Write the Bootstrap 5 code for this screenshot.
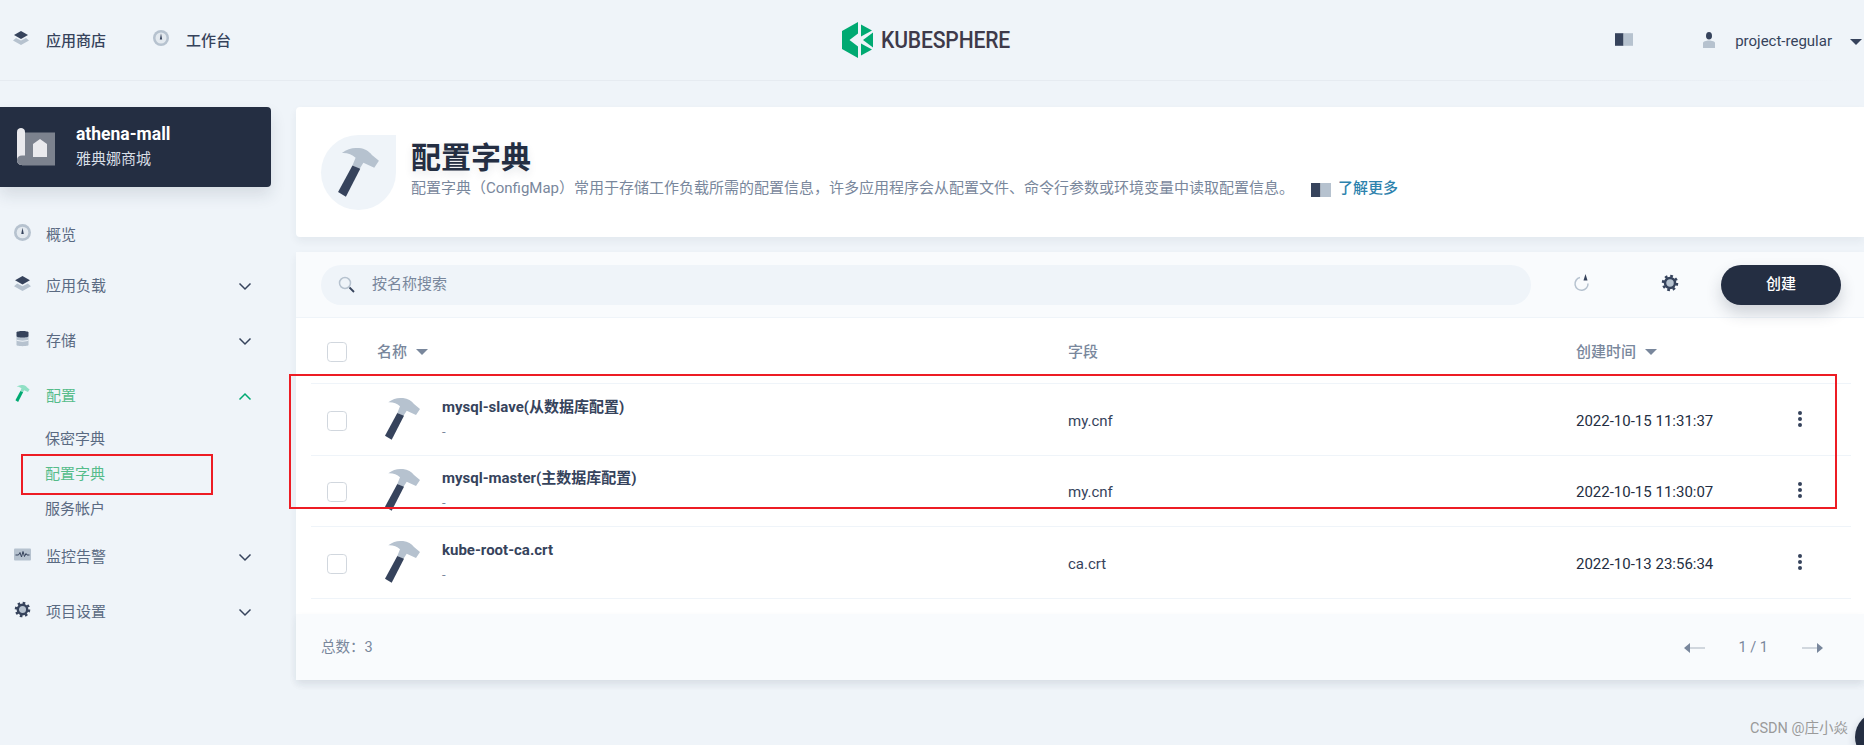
<!DOCTYPE html>
<html lang="zh">
<head>
    <meta charset="UTF-8">
    <meta name="viewport" content="width=device-width, initial-scale=1.0">
    <title>配置字典</title>
    <link href="https://cdn.jsdelivr.net/npm/bootstrap@5.3.0/dist/css/bootstrap.min.css" rel="stylesheet">
    <style>
        html, body { height: 100%; }
        body {
            position: relative;
            overflow: hidden;
            background: #eff4f9;
            color: #242e42;
            font-family: Roboto, "Noto Sans CJK SC", sans-serif;
            font-size: 15px;
        }
        /* 顶部 */
        .top-bar { height: 81px; padding: 2px 2px 0 13px; background: linear-gradient(90deg, #e6ebf1, #e6ebf1 85%, #eff4f9) bottom / 100% 1px no-repeat; }
        .top-side { width: 826px; }
        .top-link { font-weight: 500; margin-right: 47px; color: #36435c; }
        .top-link svg { width: 16px; height: 16px; margin-right: 17px; position: relative; top: -4px; }
        .logo-text { font-size: 24px; font-weight: 500; letter-spacing: -.2px; color: #3e3a4a; margin-left: 7px; transform: scaleX(.88); transform-origin: left; width: 130px; white-space: nowrap; }
        .logo-box { margin-left: 3px; position: relative; top: -2px; }
        .user-name { font-size: 15px; color: #36435c; }
        .user-name svg { position: relative; top: -2px; }
        .book-top { margin-right: 70px; }
        .person-top { margin-right: 20px; }
        .caret-down { width: 0; height: 0; margin-left: 18px; border: 6px solid transparent; border-top: 6px solid #36435c; border-bottom: 0; }
        /* 侧栏 */
        .side-col { width: 271px; flex: none; }
        .project-box { height: 80px; margin-top: 26px; padding-left: 17px; background: #242e42; border-radius: 0 4px 4px 0; box-shadow: 0 8px 16px rgba(36,46,66,.12); color: #fff; }
        .project-name { font-size: 17.500px; font-weight: 700; line-height: 24px; }
        .project-desc { font-size: 15px; line-height: 26px; color: #d8dee5; }
        .project-text { margin-left: 5px; }
        .side-menu { margin-top: 26px; color: #5a6a82; }
        .side-item { height: 44px; padding-left: 14px; margin-bottom: 11px; position: relative; }
        .side-item:first-child { margin-bottom: 7px; }
        .side-item > svg:first-child { width: 17px; height: 17px; margin-right: 15px; position: relative; top: -3px; flex: none; }
        .side-arrow { width: 14px; height: 9px; position: absolute; left: 238px; top: 18px; }
        .side-on { color: #55bc8a; margin-bottom: 4px; }
        .sub-item { height: 35px; padding-left: 45px; }
        .sub-on { color: #55bc8a; }
        .sub-wrap { margin-bottom: 8px; }
        /* 主区域 */
        .main-col { margin-left: 25px; padding-top: 26px; }
        .intro-box { height: 130px; padding-left: 25px; background: #fff; border-radius: 4px 0 0 4px; box-shadow: 0 4px 8px rgba(36,46,66,.06); margin-bottom: 15px; }
        .intro-icon { width: 75px; height: 75px; margin-right: 15px; background: #eff4f9; border-radius: 50% 0 50% 50%; flex: none; }
        .intro-title { font-size: 30px; font-weight: 700; line-height: 36px; margin-top: -7px; text-shadow: 0 4px 8px rgba(36,46,66,.1); }
        .intro-desc { font-size: 15px; line-height: 20px; color: #79879c; margin-top: 2px; }
        .more-link { color: #2d82ad; font-weight: 500; text-decoration: none; margin-left: 17px; }
        .more-link svg { width: 20px; height: 14px; margin-right: 7px; position: relative; top: 1px; }
        .list-box { border-radius: 4px 0 0 4px; background: #fff; box-shadow: 0 4px 8px rgba(36,46,66,.06); }
        .tool-bar { height: 66px; padding: 0 23px 0 25px; background: #f9fbfd; border-bottom: 1px solid #eff4f9; }
        .search-wrap { height: 40px; padding-left: 17px; background: #eff4f9; border-radius: 20px; }
        .search-wrap svg { width: 17px; height: 17px; flex: none; }
        .search-input { border: 0; outline: 0; background: transparent; margin-left: 15px; font-size: 15px; color: #242e42; width: 400px; }
        .search-input::placeholder { color: #79879c; opacity: 1; }
        .tool-slot { width: 102px; }
        .tool-slot + .tool-slot { width: 74px; margin-right: 14px; }
        .tool-slot svg { width: 18px; height: 18px; position: relative; top: -2px; }
        .create-btn { width: 120px; height: 40px; border: 0; border-radius: 20px; background: #242e42; color: #fff; font-size: 15px; font-weight: 500; box-shadow: 0 8px 16px rgba(36,46,66,.2); }
        .create-btn:hover { background: #242e42; color: #fff; }
        .table-wrap { padding: 0 13px 15px 15px; }
        .cfg-row { display: flex; align-items: center; height: 71.500px; padding-top: 3px; border-bottom: 1px solid #eff4f9; }
        .cfg-head { height: 66px; color: #79879c; font-weight: 500; }
        .cell-check { display: flex; width: 66px; padding-left: 16px; flex: none; }
        .cell-name { width: 691px; flex: none; }
        .cell-field { width: 508px; flex: none; color: #36435c; font-size: 15px; }
        .cell-time { width: 222px; flex: none; font-size: 15px; }
        .cfg-head .cell-field, .cfg-head .cell-time { color: #79879c; }
        .cfg-check { width: 20px; height: 20px; margin: 0; border: 1px solid #d1d7de; border-radius: 3px; }
        .caret-grey { display: inline-block; width: 0; height: 0; margin-left: 9px; vertical-align: 2px; border: 6px solid transparent; border-top: 6px solid #79879c; border-bottom: 0; }
        .hammer-slot { width: 35px; height: 42px; margin: 0 22px 0 8px; flex: none; position: relative; top: -2px; }
        .cfg-title { font-weight: 700; font-size: 15px; line-height: 20px; color: #36435c; margin-top: -3px; }
        .cfg-sub { font-size: 13px; line-height: 20px; color: #79879c; margin-top: 5px; }
        .more-dots { width: 4px; height: 16px; position: relative; top: -2px; }
        .pager-bar { height: 66px; padding: 3px 41px 0 25px; background: #f9fbfd; color: #79879c; font-size: 14.500px; box-shadow: 0 4px 8px rgba(36,46,66,.06); }
        .pager-bar svg { width: 21px; height: 10px; }
        .pager-num { margin: 0 34px; }
        /* 批注和水印 */
        .red-mark { position: absolute; border: 2px solid #ed1c24; pointer-events: none; }
        .mark-side { left: 21px; top: 454px; width: 192px; height: 41px; }
        .mark-rows { left: 289px; top: 374px; width: 1548px; height: 135px; }
        .water-mark { position: absolute; right: 16px; top: 719px; font-size: 14.500px; line-height: 20px; color: #9a9a9a; }
        .float-ball { position: absolute; left: 1855px; top: 712px; width: 50px; height: 50px; border-radius: 50%; background: #242e42; box-shadow: 0 4px 8px rgba(36,46,66,.2); }
    </style>
</head>
<body>

    <svg width="0" height="0" class="position-absolute">
        <symbol id="ic-hammer" viewBox="0 0 35 42">
            <path fill="#b6c2cf" d="M3.300 4.300C8 .8 13 -.4 18 .1 23 .6 26.500 3 29 6L35 11 31 17 21.700 12.700 18.500 17.700 12.300 15 15 8.300C12 5.500 8 4 3.300 4.300Z"/>
            <path fill="#36435c" d="M0 37.700 6.700 41.700 19 17.700 12.300 15Z"/>
        </symbol>
        <symbol id="ic-hammer-on" viewBox="0 0 35 42">
            <path fill="#90e0c5" d="M3.300 4.300C8 .8 13 -.4 18 .1 23 .6 26.500 3 29 6L35 11 31 17 21.700 12.700 18.500 17.700 12.300 15 15 8.300C12 5.500 8 4 3.300 4.300Z"/>
            <path fill="#00aa72" d="M0 37.700 6.700 41.700 19 17.700 12.300 15Z"/>
        </symbol>
        <symbol id="ic-layers" viewBox="0 0 16 16">
            <path fill="#b6c2cf" d="M3 8 8 10.500 13 8 16 10.500 8 15 0 10.500Z"/>
            <path fill="#36435c" d="M8 1 15 5 8 9 1 5Z"/>
        </symbol>
        <symbol id="ic-gauge" viewBox="0 0 16 16">
            <circle cx="8" cy="8" r="8" fill="#b6c2cf"/>
            <circle cx="8" cy="8" r="5.500" fill="#e3e9ef"/>
            <path fill="#36435c" d="M6.800 9.500 8 3.500 9.200 9.500Z"/>
        </symbol>
        <symbol id="ic-db" viewBox="0 0 14 17">
            <path fill="#b6c2cf" d="M1 6V15C1 16.500 13 16.500 13 15V6Z"/>
            <path fill="#eff4f9" d="M1 9.500C3 11 11 11 13 9.500V10.500C11 12 3 12 1 10.500Z"/>
            <path fill="#36435c" d="M1 2.500C1 .5 13 .5 13 2.500V6C13 8 1 8 1 6Z"/>
        </symbol>
        <symbol id="ic-pulse" viewBox="0 0 17 12">
            <rect width="17" height="12" rx="1" fill="#b6c2cf"/>
            <path fill="none" stroke="#36435c" stroke-width="1" d="M1.500 6.500H4.500L6 4 7.500 8.500 9 3 10.500 8 12 5 13 6.500H15.500"/>
        </symbol>
        <symbol id="ic-gear" viewBox="0 0 18 18">
            <circle cx="9" cy="9" r="5" fill="#b6c2cf" stroke="#36435c" stroke-width="2.500"/>
            <circle cx="9" cy="9" r="7" fill="none" stroke="#36435c" stroke-width="2.500" stroke-dasharray="2.700 2.800"/>
        </symbol>
        <symbol id="ic-book" viewBox="0 0 20 14">
            <path fill="#36435c" d="M0 0H9.500V14H0Z"/>
            <path fill="#b6c2cf" d="M9.500 0H20V14H9.500Z"/>
        </symbol>
        <symbol id="ic-person" viewBox="0 0 12 16">
            <ellipse cx="6" cy="3.800" rx="3" ry="3.800" fill="#36435c"/>
            <path fill="#b6c2cf" d="M0 11C0 9.500 3 8.500 6 8.500S12 9.500 12 11V16H0Z"/>
        </symbol>
        <symbol id="ic-down" viewBox="0 0 14 9">
            <path fill="none" stroke="#36435c" stroke-width="1.500" d="M1.500 1.500 7 7 12.500 1.500"/>
        </symbol>
        <symbol id="ic-up" viewBox="0 0 14 9">
            <path fill="none" stroke="#00aa72" stroke-width="1.500" d="M1.500 7.500 7 2 12.500 7.500"/>
        </symbol>
    </svg>

    <!-- 顶部栏 -->
    <header class="top-bar d-flex align-items-center">
        <div class="top-side d-flex align-items-center">
            <span class="top-link d-flex align-items-center"><svg><use href="#ic-layers"/></svg>应用商店</span>
            <span class="top-link d-flex align-items-center"><svg><use href="#ic-gauge"/></svg>工作台</span>
        </div>
        <div class="logo-box d-flex align-items-center flex-grow-1">
            <svg width="32" height="36" viewBox="0 0 32 36">
                <path fill="#00aa72" d="M16 0 0 9V27L16 36V24.500L7.500 18 16 11.500Z"/>
                <path fill="#00aa72" d="M19 2.500 30 8.500 19 14.500Z"/>
                <path fill="#00aa72" d="M31 10.500V25.500L21 18Z"/>
                <path fill="#00aa72" d="M19 21.500 30 27.500 19 33.500Z"/>
            </svg>
            <span class="logo-text">KUBESPHERE</span>
        </div>
        <div class="d-flex align-items-center user-name">
            <svg width="18" height="13" class="book-top"><use href="#ic-book"/></svg>
            <svg width="12" height="16" class="person-top"><use href="#ic-person"/></svg>
            <span>project-regular</span>
            <span class="caret-down"></span>
        </div>
    </header>

    <div class="d-flex">
        <!-- 侧栏 -->
        <aside class="side-col">
            <div class="project-box d-flex align-items-center">
                <svg width="38" height="38" viewBox="0 0 38 38" class="me-3 flex-shrink-0">
                    <rect x="5" y="4.500" width="33" height="33" fill="#7c828e"/>
                    <path fill="#e9e9ed" d="M0 4C0 1 2 0 4 0S8 1 8 4V28C4 28 2 29 2 32 2 35 4 37 8 37H5C2 37 0 35 0 32Z"/>
                    <path fill="#7c828e" d="M0 32C0 29 2 27.500 5 27.500H8V37H5C2 37 0 35 0 32Z"/>
                    <path fill="#e9e9ed" d="M16 16 23 11 30 16V29H16Z"/>
                </svg>
                <div class="project-text">
                    <div class="project-name">athena-mall</div>
                    <div class="project-desc">雅典娜商城</div>
                </div>
            </div>
            <ul class="side-menu list-unstyled mb-0">
                <li class="side-item d-flex align-items-center"><svg><use href="#ic-gauge"/></svg>概览</li>
                <li class="side-item d-flex align-items-center"><svg><use href="#ic-layers"/></svg>应用负载<svg class="side-arrow"><use href="#ic-down"/></svg></li>
                <li class="side-item d-flex align-items-center"><svg><use href="#ic-db"/></svg>存储<svg class="side-arrow"><use href="#ic-down"/></svg></li>
                <li class="side-item side-on d-flex align-items-center"><svg><use href="#ic-hammer-on"/></svg>配置<svg class="side-arrow"><use href="#ic-up"/></svg></li>
                <li class="sub-wrap">
                    <div class="sub-item d-flex align-items-center">保密字典</div>
                    <div class="sub-item sub-on d-flex align-items-center">配置字典</div>
                    <div class="sub-item d-flex align-items-center">服务帐户</div>
                </li>
                <li class="side-item d-flex align-items-center"><svg><use href="#ic-pulse"/></svg>监控告警<svg class="side-arrow"><use href="#ic-down"/></svg></li>
                <li class="side-item d-flex align-items-center"><svg><use href="#ic-gear"/></svg>项目设置<svg class="side-arrow"><use href="#ic-down"/></svg></li>
            </ul>
        </aside>

        <!-- 主内容 -->
        <main class="main-col flex-grow-1">
            <section class="intro-box d-flex align-items-center">
                <div class="intro-icon d-flex align-items-center justify-content-center">
                    <svg width="43" height="49"><use href="#ic-hammer"/></svg>
                </div>
                <div>
                    <div class="intro-title">配置字典</div>
                    <div class="intro-desc">配置字典（ConfigMap）常用于存储工作负载所需的配置信息，许多应用程序会从配置文件、命令行参数或环境变量中读取配置信息。<a href="#" class="more-link"><svg><use href="#ic-book"/></svg>了解更多</a></div>
                </div>
            </section>

            <section class="list-box">
                <div class="tool-bar d-flex align-items-center">
                    <div class="search-wrap d-flex align-items-center flex-grow-1">
                        <svg viewBox="0 0 17 17">
                            <circle cx="7" cy="7" r="5.500" fill="none" stroke="#b6c2cf" stroke-width="1.500"/>
                            <path stroke="#36435c" stroke-width="1.800" d="M11.500 11.500 16 16"/>
                        </svg>
                        <input class="search-input" type="text" placeholder="按名称搜索">
                    </div>
                    <div class="tool-slot d-flex justify-content-center">
                        <svg viewBox="0 0 18 18">
                            <path fill="none" stroke="#b6c2cf" stroke-width="1.500" d="M7 3.500A6.500 6.500 0 1 0 15 9.500"/>
                            <path fill="#36435c" d="M12.500 0 14.500 6.500 10.500 6.500Z"/>
                        </svg>
                    </div>
                    <div class="tool-slot d-flex justify-content-center"><svg><use href="#ic-gear"/></svg></div>
                    <button class="btn create-btn">创建</button>
                </div>

                <div class="table-wrap">
                    <div class="cfg-row cfg-head">
                        <div class="cell-check"><input class="form-check-input cfg-check" type="checkbox"></div>
                        <div class="cell-name">名称<span class="caret-grey"></span></div>
                        <div class="cell-field">字段</div>
                        <div class="cell-time">创建时间<span class="caret-grey"></span></div>
                    </div>
                    <div class="cfg-row">
                        <div class="cell-check"><input class="form-check-input cfg-check" type="checkbox"></div>
                        <div class="cell-name d-flex align-items-center">
                            <svg class="hammer-slot"><use href="#ic-hammer"/></svg>
                            <div><div class="cfg-title">mysql-slave(从数据库配置)</div><div class="cfg-sub">-</div></div>
                        </div>
                        <div class="cell-field">my.cnf</div>
                        <div class="cell-time">2022-10-15 11:31:37</div>
                        <svg class="more-dots" viewBox="0 0 4 16"><circle cx="2" cy="2" r="2" fill="#36435c"/><circle cx="2" cy="8" r="2" fill="#36435c"/><circle cx="2" cy="14" r="2" fill="#36435c"/></svg>
                    </div>
                    <div class="cfg-row">
                        <div class="cell-check"><input class="form-check-input cfg-check" type="checkbox"></div>
                        <div class="cell-name d-flex align-items-center">
                            <svg class="hammer-slot"><use href="#ic-hammer"/></svg>
                            <div><div class="cfg-title">mysql-master(主数据库配置)</div><div class="cfg-sub">-</div></div>
                        </div>
                        <div class="cell-field">my.cnf</div>
                        <div class="cell-time">2022-10-15 11:30:07</div>
                        <svg class="more-dots" viewBox="0 0 4 16"><circle cx="2" cy="2" r="2" fill="#36435c"/><circle cx="2" cy="8" r="2" fill="#36435c"/><circle cx="2" cy="14" r="2" fill="#36435c"/></svg>
                    </div>
                    <div class="cfg-row">
                        <div class="cell-check"><input class="form-check-input cfg-check" type="checkbox"></div>
                        <div class="cell-name d-flex align-items-center">
                            <svg class="hammer-slot"><use href="#ic-hammer"/></svg>
                            <div><div class="cfg-title">kube-root-ca.crt</div><div class="cfg-sub">-</div></div>
                        </div>
                        <div class="cell-field">ca.crt</div>
                        <div class="cell-time">2022-10-13 23:56:34</div>
                        <svg class="more-dots" viewBox="0 0 4 16"><circle cx="2" cy="2" r="2" fill="#36435c"/><circle cx="2" cy="8" r="2" fill="#36435c"/><circle cx="2" cy="14" r="2" fill="#36435c"/></svg>
                    </div>
                </div>

                <div class="pager-bar d-flex align-items-center justify-content-between">
                    <span>总数：3</span>
                    <div class="d-flex align-items-center">
                        <svg viewBox="0 0 21 10"><rect x="5" y="4" width="16" height="2" fill="#d1d7de"/><path fill="#79879c" d="M0 5 6 0V10Z"/></svg>
                        <span class="pager-num">1 / 1</span>
                        <svg viewBox="0 0 21 10"><rect x="0" y="4" width="16" height="2" fill="#d1d7de"/><path fill="#79879c" d="M21 5 15 0V10Z"/></svg>
                    </div>
                </div>
            </section>
        </main>
    </div>

    <!-- 截图上的红框 -->
    <div class="red-mark mark-side"></div>
    <div class="red-mark mark-rows"></div>
    <div class="water-mark">CSDN @庄小焱</div>
    <div class="float-ball"></div>

    <script src="https://cdn.jsdelivr.net/npm/bootstrap@5.3.0/dist/js/bootstrap.bundle.min.js"></script>
</body>
</html>
